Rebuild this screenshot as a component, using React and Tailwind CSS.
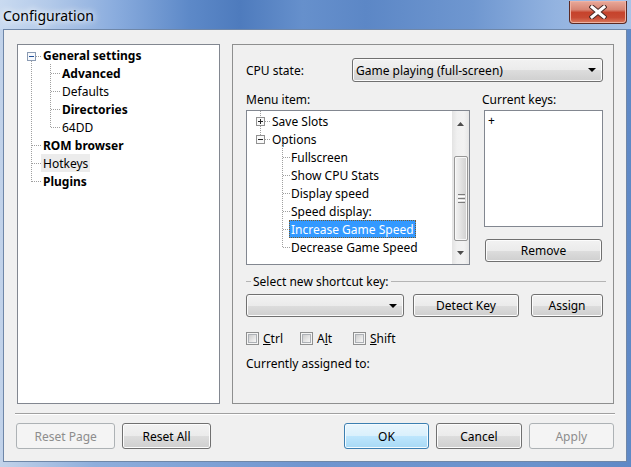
import React from 'react'

const btnBase =
  'flex items-center justify-center rounded-[3px] border pt-[1px] text-[12px] leading-none'
const btnNormal =
  'border-[#707070] bg-[linear-gradient(#f2f2f2,#ebebeb_50%,#dddddd_50%,#cfcfcf)] shadow-[inset_0_0_0_1px_#fcfcfc] text-black'
const btnDefault =
  'border-[#3c7fb1] bg-[linear-gradient(#eaf6fd,#d9f0fc_50%,#bee6fd_50%,#a7d9f5)] shadow-[inset_0_0_0_1px_#f4fbff] text-black'
const btnDisabled = 'border-[#adb2b5] bg-[#f4f4f4] text-[#8d8d8d]'

const Button = ({ children, className = '', kind = 'normal' }) => (
  <div
    className={`${btnBase} ${
      kind === 'default' ? btnDefault : kind === 'disabled' ? btnDisabled : btnNormal
    } ${className}`}
  >
    {children}
  </div>
)

const Combo = ({ children, className = '' }) => (
  <div
    className={`flex items-center rounded-[3px] border border-[#707070] bg-[linear-gradient(#f2f2f2,#ebebeb_50%,#dddddd_50%,#cfcfcf)] shadow-[inset_0_0_0_1px_#fbfbfb] pl-[3px] pr-[6px] ${className}`}
  >
    <span className="flex-1 truncate pt-[1px]">{children}</span>
    <svg width="8" height="4" viewBox="0 0 8 4">
      <path d="M0 0h8L4 4z" fill="#000" />
    </svg>
  </div>
)

const Check = ({ label, u, className = '' }) => {
  const i = label.indexOf(u)
  return (
    <div className={`flex h-[13px] items-center ${className}`}>
      <div className="h-[13px] w-[13px] border border-[#8e8f8f] bg-[#f4f4f4] p-[1px]">
        <div className="h-full w-full border border-[#adb1b6] bg-[linear-gradient(135deg,#cdcdcd,#f7f7f7)]" />
      </div>
      <span className="ml-[4px] pt-[1px] leading-[16px]">
        {label.slice(0, i)}
        <span className="underline">{u}</span>
        {label.slice(i + 1)}
      </span>
    </div>
  )
}

const Row = ({ children, indent, bold, hl, sel }) => (
  <div className="flex h-[18px] items-center">
    <span
      style={{ marginLeft: indent }}
      className={`h-[18px] px-[2px] pt-[2px] leading-[16px] ${bold ? 'font-bold' : ''} ${
        hl ? 'bg-[#ececec]' : ''
      } ${sel ? 'bg-[#3399ff] text-white outline outline-1 outline-dotted outline-[#7a5a2a] -outline-offset-1' : ''}`}
    >
      {children}
    </span>
  </div>
)

const Dot = (props) => (
  <line {...props} stroke="#a0a0a0" strokeWidth="1" strokeDasharray="1 1" />
)

function LeftTree() {
  return (
    <div className="relative h-[360px] w-[203px] border border-[#828790] bg-white pt-[1px]">
      <svg className="pointer-events-none absolute left-[-1px] top-[-1px]" width="203" height="360">
        <g transform="translate(-17,-44)">
          <Dot x1="31.5" y1="61" x2="31.5" y2="182" />
          <Dot x1="36" y1="56.5" x2="42" y2="56.5" />
          <Dot x1="32" y1="145.5" x2="42" y2="145.5" />
          <Dot x1="32" y1="163.5" x2="42" y2="163.5" />
          <Dot x1="32" y1="181.5" x2="42" y2="181.5" />
          <Dot x1="50.5" y1="64" x2="50.5" y2="128" />
          <Dot x1="51" y1="73.5" x2="60" y2="73.5" />
          <Dot x1="51" y1="91.5" x2="60" y2="91.5" />
          <Dot x1="51" y1="109.5" x2="60" y2="109.5" />
          <Dot x1="51" y1="127.5" x2="60" y2="127.5" />
          <rect x="27.5" y="52.5" width="8" height="8" fill="#f7f9fc" stroke="#8b9bb3" />
          <line x1="29" y1="56.5" x2="34" y2="56.5" stroke="#1f4f9a" />
        </g>
      </svg>
      <Row indent={23} bold>General settings</Row>
      <Row indent={42} bold>Advanced</Row>
      <Row indent={42}>Defaults</Row>
      <Row indent={42} bold>Directories</Row>
      <Row indent={42}>64DD</Row>
      <Row indent={23} bold>ROM browser</Row>
      <Row indent={23} hl>Hotkeys</Row>
      <Row indent={23} bold>Plugins</Row>
    </div>
  )
}

function ScrollBar() {
  return (
    <div className="flex w-[17px] flex-col bg-[linear-gradient(90deg,#e3e3e3,#f0f0f0_30%,#f2f2f2_70%,#e6e6e6)]">
      <div className="flex h-[24px] items-center justify-center pt-[1px]">
        <svg width="7" height="4" viewBox="0 0 7 4">
          <path d="M3.5 0L7 4H0z" fill="#4d4d4d" />
        </svg>
      </div>
      <div className="mt-[21px] ml-[2px] flex h-[85px] w-[14px] flex-col items-center justify-center gap-[1px] rounded-[2px] border border-[#979797] bg-[linear-gradient(90deg,#f3f3f3,#e2e2e2_50%,#d0d0d0)] shadow-[inset_0_0_0_1px_#f8f8f8]">
        <div className="h-[1px] w-[7px] bg-[#7c7c7c]" />
        <div className="h-[1px] w-[7px] bg-[#ffffff]" />
        <div className="h-[1px] w-[7px] bg-[#7c7c7c]" />
        <div className="h-[1px] w-[7px] bg-[#ffffff]" />
        <div className="h-[1px] w-[7px] bg-[#7c7c7c]" />
      </div>
      <div className="flex flex-1 items-center justify-center">
        <svg width="7" height="4" viewBox="0 0 7 4">
          <path d="M0 0h7L3.5 4z" fill="#4d4d4d" />
        </svg>
      </div>
    </div>
  )
}

function MenuList() {
  return (
    <div className="relative mt-[3px] flex h-[155px] w-[224px] border border-[#828790] bg-white">
      <svg className="pointer-events-none absolute left-[-1px] top-[-1px]" width="224" height="155">
        <g transform="translate(-246,-110)">
          <Dot x1="260.5" y1="111" x2="260.5" y2="117" />
          <Dot x1="260.5" y1="126" x2="260.5" y2="135" />
          <Dot x1="265" y1="121.5" x2="271" y2="121.5" />
          <Dot x1="265" y1="139.5" x2="271" y2="139.5" />
          <Dot x1="282.5" y1="144" x2="282.5" y2="248" />
          <Dot x1="283" y1="157.5" x2="290" y2="157.5" />
          <Dot x1="283" y1="175.5" x2="290" y2="175.5" />
          <Dot x1="283" y1="193.5" x2="290" y2="193.5" />
          <Dot x1="283" y1="211.5" x2="290" y2="211.5" />
          <Dot x1="283" y1="229.5" x2="289" y2="229.5" />
          <Dot x1="283" y1="247.5" x2="290" y2="247.5" />
          <rect x="256.5" y="117.5" width="8" height="8" fill="#f9f9f9" stroke="#919191" />
          <line x1="258" y1="121.5" x2="263" y2="121.5" stroke="#222" />
          <line x1="260.5" y1="119" x2="260.5" y2="124" stroke="#222" />
          <rect x="256.5" y="135.5" width="8" height="8" fill="#f9f9f9" stroke="#919191" />
          <line x1="258" y1="139.5" x2="263" y2="139.5" stroke="#222" />
        </g>
      </svg>
      <div className="flex-1 pt-[1px]">
        <Row indent={23}>Save Slots</Row>
        <Row indent={23}>Options</Row>
        <Row indent={42}>Fullscreen</Row>
        <Row indent={42}>Show CPU Stats</Row>
        <Row indent={42}>Display speed</Row>
        <Row indent={42}>Speed display:</Row>
        <Row indent={42} sel>Increase Game Speed</Row>
        <Row indent={42}>Decrease Game Speed</Row>
      </div>
      <ScrollBar />
    </div>
  )
}

function RightPanel() {
  return (
    <div className="h-[360px] w-[382px] border border-[#8e8f8f] pl-[13px] pr-[10px] pt-[13px]">
      <div className="flex h-[24px] items-center">
        <div className="w-[106px] pt-[1px]">CPU state:</div>
        <Combo className="h-[24px] w-[251px]">Game playing (full-screen)</Combo>
      </div>
      <div className="mt-[9px] flex">
        <div className="w-[224px]">
          <div className="h-[16px] pt-[1px] leading-[15px]">Menu item:</div>
          <MenuList />
        </div>
        <div className="ml-[12px] w-[121px]">
          <div className="h-[16px] pt-[1px] leading-[15px]">Current keys:</div>
          <div className="ml-[2px] mt-[3px] h-[117px] w-[119px] border border-[#828790] bg-white px-[3px] pt-[1px] leading-[18px]">
            +
          </div>
          <Button className="ml-[3px] mt-[12px] h-[23px] w-[117px]">Remove</Button>
        </div>
      </div>
      <div className="mt-[8px] flex h-[16px] items-center">
        <div className="h-[1px] w-[5px] bg-[#b4b4b4]" />
        <span className="px-[2px] pt-[1px] leading-[15px]">Select new shortcut key:</span>
        <div className="-mr-[3px] h-[1px] flex-1 bg-[#b4b4b4]" />
      </div>
      <div className="mt-[5px] flex h-[23px]">
        <Combo className="h-[23px] w-[158px]" />
        <Button className="ml-[9px] h-[23px] w-[106px]">Detect Key</Button>
        <Button className="ml-[12px] h-[23px] w-[72px]">Assign</Button>
      </div>
      <div className="mt-[15px] flex">
        <Check label="Ctrl" u="C" className="w-[54px]" />
        <Check label="Alt" u="l" className="w-[53px]" />
        <Check label="Shift" u="S" />
      </div>
      <div className="mt-[10px] h-[16px] pt-[1px] leading-[15px]">Currently assigned to:</div>
    </div>
  )
}

export default function App() {
  return (
    <div className="flex h-[467px] w-[631px] flex-col overflow-hidden bg-[linear-gradient(90deg,#c2d3ea,#8eaedc_15%,#6f95cf_50%,#6a92cc_85%,#5f89c6)] font-['Noto_Sans',sans-serif] text-[12px] text-black">
      <div className="flex h-[29px] shrink-0 bg-[linear-gradient(90deg,#c9daf0_0%,#b2c9e9_8%,#8badde_18%,#5d89c8_30%,#4e7bbd_38%,#6690cc_48%,#5c87c6_58%,#6f97d0_75%,#93b3e0_88%,#a8c3e8_100%)]">
        <div className="flex flex-1 items-center pl-[3px] pt-[1px] text-[14px] [text-shadow:0_0_6px_#fff,0_0_10px_#fff]">
          Configuration
        </div>
        <div className="mr-[4px] mt-[1px] flex h-[23px] w-[58px] items-center justify-center rounded-b-[4px] border border-t-0 border-[#5b2a24] bg-[linear-gradient(#e9aa9b,#d78472_40%,#c6432c_52%,#c84a33_75%,#d97a60)] shadow-[inset_0_0_0_1px_#eeb2a4]">
          <svg width="18" height="14" viewBox="0 0 18 14">
            <path d="M3 2L15 12M15 2L3 12" stroke="#4a2a26" strokeWidth="5" strokeLinecap="square" />
            <path d="M3 2L15 12M15 2L3 12" stroke="#ffffff" strokeWidth="3" strokeLinecap="square" />
          </svg>
        </div>
      </div>
      <div className="ml-[3px] h-[433px] w-[624px] border border-[#6f87a8] bg-[#f0f0f0] pl-[13px] pr-[12px] pt-[14px]">
        <div className="flex">
          <LeftTree />
          <div className="ml-[12px]">
            <RightPanel />
          </div>
        </div>
        <div className="ml-[-2px] mt-[9px] h-[2px] w-[600px] border-t border-[#a0a0a0] border-b-0 bg-white" />
        <div className="ml-[-1px] mt-[8px] flex h-[26px]">
          <Button kind="disabled" className="h-[26px] w-[100px]">Reset Page</Button>
          <Button className="ml-[7px] h-[26px] w-[89px]">Reset All</Button>
          <Button kind="default" className="ml-[133px] h-[26px] w-[86px]">OK</Button>
          <Button className="ml-[7px] h-[26px] w-[86px]">Cancel</Button>
          <Button kind="disabled" className="ml-[7px] h-[26px] w-[86px]">Apply</Button>
        </div>
      </div>
    </div>
  )
}
